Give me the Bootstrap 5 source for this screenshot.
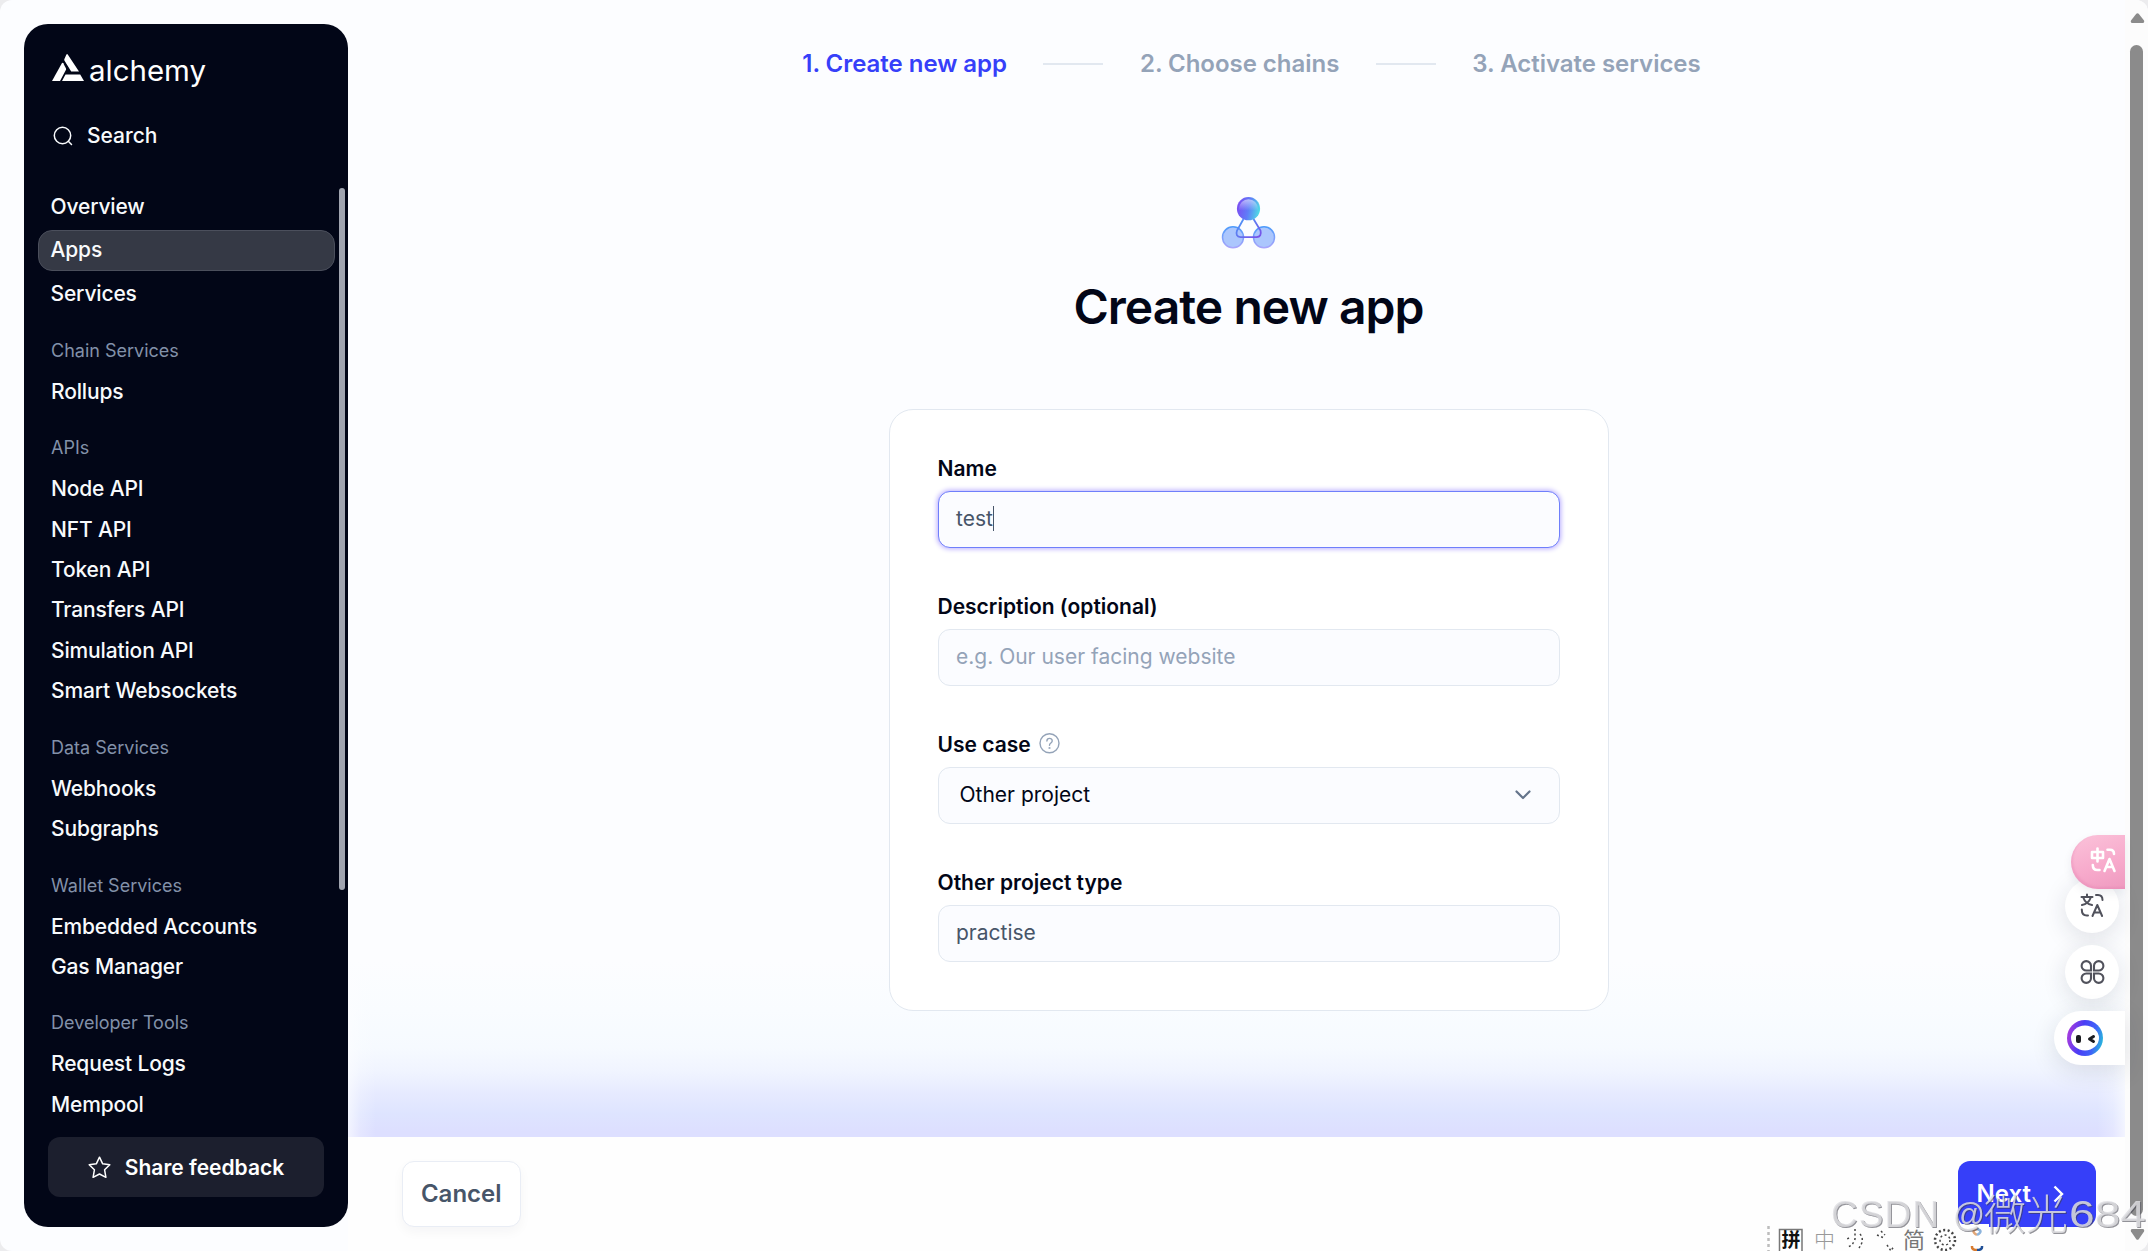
<!DOCTYPE html>
<html lang="en">
<head>
  <meta charset="UTF-8">
  <title>Create new app</title>
  <link rel="stylesheet" href="https://cdn.jsdelivr.net/npm/bootstrap@5.3.0/dist/css/bootstrap.min.css">
  <style>
    html { background: #ececee; }
    body {
      font-family: Inter, "Noto Sans CJK SC", sans-serif;
      font-size: 21px;
      line-height: 30px;
      color: #020617;
      background: transparent;
    }
    svg { display: block; flex: none; }

    .app-window { height: 1251px; background: #fcfdff; border-radius: 12px; }

    /* sidebar */
    .sidebar { width: 324px; height: 1203px; margin: 24px 0 0 24px; background: #020617; color: #f8fafc; border-radius: 24px; flex: none; font-weight: 500; }
    .brand { padding: 22px 0 0 27px; height: 76px; }
    .search-row { height: 72px; padding-left: 29px; gap: 14px; }
    .side-body { height: 957px; padding: 14px 3px 0 13.5px; letter-spacing: -.15px; }
    .side-list { width: 297px; flex: none; }
    .side-list a { display: flex; align-items: center; height: 40.4px; padding-left: 13.5px; color: #f8fafc; text-decoration: none; }
    .side-list a.top-link { height: 41.5px; margin-bottom: 2px; border: 1.5px solid transparent; padding-left: 12px; }
    .side-list a.active { background: #353945; border-color: #4b4f5c; border-radius: 14px; }
    .side-title { height: 41.6px; margin-top: 15.5px; padding-left: 13.5px; font-size: 18px; font-weight: 400; letter-spacing: 0; color: #8291a9; display: flex; align-items: center; }
    .side-thumb { width: 6px; height: 702px; margin-top: 2px; background: #a1a5b0; border-radius: 3px; }
    .feedback { width: 276px; height: 60px; margin: 8px 0 0 24px; padding: 1px 2px 0; gap: 14px; font-size: 21px; background: #1c1f2e; color: #fff; border-radius: 12px; font-weight: 600; }

    /* main */
    .glow {
      height: 1136.5px;
      padding-left: 24px;
      background:
        linear-gradient(to right, rgba(252,253,255,.7), rgba(252,253,255,.25) 12px, rgba(252,253,255,0) 28px),
        linear-gradient(to left, rgba(252,253,255,.7), rgba(252,253,255,.25) 12px, rgba(252,253,255,0) 28px),
        linear-gradient(to bottom, #fcfdff 960px, #f9fcff 1010px, #f6faff 1048px, #f0f4ff 1072px, #e6eaff 1094px, #dee4ff 1114px, #dddfff 1132px);
    }
    .steps { height: 40px; margin: 44px 0 0 6px; gap: 36.5px; font-size: 24px; font-weight: 600; color: #94a3b8; letter-spacing: -.03px; }
    .steps .current { color: #363ff9; }
    .step-line { width: 60px; height: 2px; background: #e2e8f0; }
    .app-icon { margin-top: 106px; margin-right: 1px; }
    .page-title { font-size: 48px; line-height: 60px; font-weight: 600; letter-spacing: -.02em; margin: 21px 0 72px; }

    .form-card { width: 720px; height: 602px; padding: 44px 48px 0; background: #fff; border: 1.5px solid #e2e8f0; border-radius: 24px; }
    .field { margin-bottom: 43.5px; }
    .field label { font-weight: 600; height: 30px; margin-bottom: 6.5px; gap: 8px; display: flex; align-items: center; }
    .field + .field { padding-top: 1px; }
    .field .form-control { height: 57px; padding: 0 17.5px 1px; font-size: 21px; line-height: 30px; color: #475569; background: #fbfcff; border: 1.5px solid #e2e8f0; border-radius: 12px; }
    .field .form-control::placeholder { color: #94a3b8; }
    .field .focused { border-color: #6f7ffb; box-shadow: 0 0 5px 1px #b9adff; }
    .field .picker { color: #020617; padding: 0 27px 0 21px; }
    .caret { width: 1.5px; height: 25px; background: #475569; }

    .action-bar { height: 114.5px; padding: 24px 29.5px 0 54px; background: #fefefe; }
    .action-bar .btn { height: 66px; font-size: 24px; font-weight: 600; border-radius: 12px; padding: 0; }
    .action-bar .btn-cancel { width: 118.5px; color: #475569; background: #fff; border: 1.5px solid #e9edf5; box-shadow: 0 5px 12px rgba(15,23,42,.04); }
    .action-bar .btn-next { width: 138px; padding: 1px 0 0 19px; gap: 22px; color: #fff; background: #363ff9; border: 0; }

    .page-scroll { width: 23px; flex: none; background: #fcfcfc; padding: 13px 0 0 5px; }
    .page-thumb { width: 13px; height: 1171px; margin: 22px 0 13px; background: #8b8b8b; border-radius: 7px; }

    /* widgets that float over the page */
    .float-item { position: absolute; background: #fff; display: flex; align-items: center; box-shadow: 0 6px 24px rgba(30,35,60,.13); }
    .float-cn { left: 2071px; top: 835px; width: 54px; height: 54px; padding: 0 0 4px 19px; border-radius: 27px 0 0 27px; background: linear-gradient(160deg, #fbc3da, #f7a9cb 60%, #ee9abf); box-shadow: inset 2px -2px 2px rgba(225,120,170,.25), 0 4px 10px rgba(30,35,60,.08); z-index: 2; }
    .float-round { left: 2065px; width: 54px; height: 54px; border-radius: 27px; padding: 0 0 1px 15px; }
    .float-tr { top: 879px; }
    .float-grid { top: 945px; }
    .float-bot { left: 2054px; top: 1011px; width: 71px; height: 54px; padding-left: 13px; border-radius: 27px 0 0 27px; }
    .overlay { position: absolute; right: 0; bottom: 0; z-index: 3; }
  </style>
</head>
<body>
  <div class="app-window d-flex position-relative overflow-hidden">

    <aside class="sidebar d-flex flex-column">
      <div class="brand">
        <svg width="160" height="46" viewBox="0 0 160 46" fill="#fff">
          <path d="M15.300 8.700q.8-1.300 1.600 0L28 25.500H20.200L13.400 14.500q-.4-.8 0-1.500z"/>
          <path d="M11 17q.7-.7 1.300.2l2.700 5.300q.3.700 0 1.300L9 35H1z"/>
          <path d="M14.500 28.500h14.700L33 35H11z"/>
          <text x="38" y="35" font-family="Inter" font-size="29" font-weight="400" textLength="117" lengthAdjust="spacingAndGlyphs">alchemy</text>
        </svg>
      </div>
      <div class="search-row d-flex align-items-center">
        <svg width="20" height="20" viewBox="0 0 20 20" fill="none" stroke="#f8fafc" stroke-width="1.5" stroke-linecap="round"><circle cx="9.500" cy="9.500" r="8.200"/><path d="M15.300 15.300l3.200 3.200"/></svg>
        <span>Search</span>
      </div>
      <div class="side-body d-flex justify-content-between overflow-hidden">
        <nav class="side-list" id="side-list"></nav>
        <div class="side-thumb"></div>
      </div>
      <button class="feedback btn d-flex align-items-center justify-content-center border-0">
        <svg width="23" height="23" viewBox="0 0 23 23" fill="none" stroke="#fff" stroke-width="1.500" stroke-linejoin="round"><path d="M11.500 1.200l3.200 6.600 7.100 1-5.200 5 1.300 7.500-6.400-3.300-6.400 3.300 1.300-7.500-5.200-5 7.100-1z"/></svg>
        <span>Share feedback</span>
      </button>
    </aside>

    <main class="flex-grow-1 d-flex flex-column">
      <div class="glow d-flex flex-column align-items-center">
        <div class="steps d-flex align-items-center">
          <span class="current">1. Create new app</span>
          <span class="step-line"></span>
          <span>2. Choose chains</span>
          <span class="step-line"></span>
          <span>3. Activate services</span>
        </div>

        <svg class="app-icon" width="66" height="66" viewBox="0 0 66 66">
          <defs>
            <linearGradient id="ball" x1="0" y1=".4" x2="1" y2=".6"><stop offset="0" stop-color="#7b4df2"/><stop offset=".5" stop-color="#5f7df8"/><stop offset="1" stop-color="#4fe0e4"/></linearGradient>
            <linearGradient id="shine" x1="0" y1="0" x2="0" y2="1"><stop offset="0" stop-color="#fff" stop-opacity=".55"/><stop offset=".6" stop-color="#fff" stop-opacity="0"/></linearGradient>
            <linearGradient id="wire" x1="0" y1="0" x2="1" y2="1"><stop offset="0" stop-color="#4a9cf8"/><stop offset="1" stop-color="#7a4fe8"/></linearGradient>
            <linearGradient id="ring" x1="0" y1="0" x2="0" y2="1"><stop offset="0" stop-color="#4d9bfb"/><stop offset="1" stop-color="#a9a5fb"/></linearGradient>
          </defs>
          <g fill="#abc6fd" stroke="url(#ring)" stroke-width="1.500">
            <circle cx="18" cy="47.300" r="10.500"/>
            <circle cx="49" cy="47.300" r="10.500"/>
          </g>
          <path d="M28.500 29L22 40.500q-2 6 3.500 6.700h16q5.500-.7 4-6.700L38.500 29" fill="none" stroke="url(#wire)" stroke-width="1.800"/>
          <circle cx="33.500" cy="18.700" r="11.600" fill="url(#ball)"/>
          <circle cx="33.500" cy="18.700" r="9.500" fill="url(#shine)"/>
        </svg>
        <h1 class="page-title">Create new app</h1>

        <form class="form-card">
          <div class="field">
            <label>Name</label>
            <div class="form-control focused d-flex align-items-center"><span>test</span><span class="caret"></span></div>
          </div>
          <div class="field">
            <label for="desc">Description (optional)</label>
            <input id="desc" class="form-control" placeholder="e.g. Our user facing website">
          </div>
          <div class="field">
            <label>Use case
              <svg width="21" height="24" viewBox="0 0 21 24" fill="none" stroke="#94a3b8" stroke-width="1.400" stroke-linecap="round"><circle cx="10.500" cy="10.300" r="9.500"/><path d="M7.900 8c.1-3.500 5.400-3.400 5.300 0 0 2-2.700 2.100-2.700 4.200"/><circle cx="10.500" cy="15" r=".4"/></svg>
            </label>
            <div class="form-control picker d-flex align-items-center justify-content-between">
              <span>Other project</span>
              <svg width="18" height="12" viewBox="0 0 18 12" fill="none" stroke="#64748b" stroke-width="2.200" stroke-linecap="round" stroke-linejoin="round"><path d="M2.500 2.500L9 9l6.500-6.500"/></svg>
            </div>
          </div>
          <div class="field">
            <label for="kind">Other project type</label>
            <input id="kind" class="form-control" value="practise">
          </div>
        </form>
      </div>

      <div class="action-bar d-flex justify-content-between">
        <button class="btn btn-cancel">Cancel</button>
        <button class="btn btn-next d-flex align-items-center">
          <span>Next</span>
          <svg width="11" height="18" viewBox="0 0 11 18" fill="none" stroke="#fff" stroke-width="2.400"><path d="M1.500 1.500L9 9l-7.500 7.500"/></svg>
        </button>
      </div>
    </main>

    <div class="page-scroll">
      <svg width="15" height="10" viewBox="0 0 15 10" fill="#8b8b8b"><path d="M6.300.8q1.200-1 2.400 0L14 7.600q.8 2.400-1.500 2.400h-10Q.2 10 1 7.600z"/></svg>
      <div class="page-thumb"></div>
      <svg width="15" height="11" viewBox="0 0 15 11" fill="#8b8b8b"><path d="M6.300 10.200q1.200 1 2.400 0L14 2.400Q14.800 0 12.500 0h-10Q.2 0 1 2.400z"/></svg>
    </div>

    <div class="float-item float-cn">
      <svg width="27" height="26" viewBox="0 0 27 26" fill="none" stroke="#fff" stroke-width="2.600" stroke-linecap="round" stroke-linejoin="round">
        <path d="M2 5h11v6H2zM7.500 1.500v13M17.500 2.800h2.500q4 0 4 4.200M2.800 18q0 5 4.500 5h2.200M14.500 24l5-12 5 12M16.500 20h6"/>
      </svg>
    </div>
    <div class="float-item float-round float-tr">
      <svg width="25" height="25" viewBox="0 0 25 25" fill="none" stroke="#51525c" stroke-width="2" stroke-linecap="round" stroke-linejoin="round">
        <path d="M1.500 4h11M7 1.500V4M3.500 5q2 6 8.500 7M10.500 5q-2 6-8.500 7M16 2h2q4.500 0 4.500 5M1.800 16.500q0 6 5 6H8M12.500 23l4.800-11 4.800 11M14.200 19.500h6.200"/>
      </svg>
    </div>
    <div class="float-item float-round float-grid">
      <svg width="25" height="24" viewBox="0 0 25 24" fill="none" stroke="#51525c" stroke-width="2.100">
        <path d="M11 10.500H6.500A4.700 4.700 0 1 1 11 5.800zM14 10.500h4.500A4.700 4.700 0 1 0 14 5.800zM11 13.500H6.500A4.700 4.700 0 1 0 11 18.200zM14 13.500h4.500A4.700 4.700 0 1 1 14 18.200z"/>
      </svg>
    </div>
    <div class="float-item float-bot">
      <svg width="36" height="36" viewBox="0 0 36 36">
        <defs><linearGradient id="bot" x1="0" y1=".6" x2="1" y2=".8"><stop offset="0" stop-color="#a03be0"/><stop offset=".35" stop-color="#4a3df5"/><stop offset=".7" stop-color="#3f62f8"/><stop offset="1" stop-color="#25c5d8"/></linearGradient></defs>
        <circle cx="18" cy="18" r="18" fill="url(#bot)"/>
        <ellipse cx="18" cy="18" rx="14" ry="12.500" fill="#fff"/>
        <rect x="9" y="15" width="5" height="8" rx="2" fill="#1b1c22"/>
        <path d="M26.500 16.500L22.500 19l4 2.500" fill="none" stroke="#1b1c22" stroke-width="3" stroke-linecap="round" stroke-linejoin="round"/>
      </svg>
    </div>

    <!-- input method bar and watermark in the bottom right corner -->
    <svg class="overlay" width="388" height="61" viewBox="1760 1190 388 61">
      <path d="M1763 1224h226v27h-226z" fill="#fefefe"/>
      <path d="M1768.500 1226v25" stroke="#bdbdbd" stroke-width="2.500" stroke-dasharray="3 3"/>
      <path d="M1779.500 1229.500h22.500v24h-22.500z" fill="#fff" stroke="#777" stroke-width="1.500"/>
      <g font-family="Noto Sans CJK SC" font-size="19">
        <text x="1781.500" y="1247" font-weight="700" fill="#111">拼</text>
        <text x="1814" y="1247" font-size="21" font-weight="300" fill="#999">中</text>
        <text x="1903" y="1248" font-size="22" font-weight="400" fill="#777">简</text>
      </g>
      <g fill="none" stroke="#444" stroke-width="1.500" stroke-dasharray="2 2.500">
        <path d="M1855 1229v10q-2 7-8 8M1860 1234q5 6-1 14M1849 1238l-4 2M1877 1235l7 3M1881 1231l4 4M1887 1245l4 6 3-5"/>
        <circle cx="1945" cy="1240" r="10" stroke-width="2.500"/>
        <circle cx="1945" cy="1240" r="5"/>
      </g>
      <g fill="none" stroke-width="2.500">
        <path d="M1977 1229q-7 2 0 6" stroke="#e2a677"/>
        <path d="M1977 1229q7 2 0 6" stroke="#8cb3dc"/>
        <path d="M1972 1246v1q0 3 5 3" stroke="#d77a2e"/>
        <path d="M1982 1246v1q0 3-5 3" stroke="#1f4f96"/>
      </g>
      <g font-family="'Liberation Sans', 'Noto Sans CJK SC'" font-size="37" style="filter: drop-shadow(1px 1px .7px rgba(60,60,70,.65))" fill="#dedee2" fill-opacity=".85">
        <text x="1831" y="1226.500" textLength="108">CSDN</text>
        <text x="1953" y="1225.500" font-size="33" textLength="32" lengthAdjust="spacingAndGlyphs">@</text>
        <text x="1984" y="1230" font-size="42" font-family="Noto Sans CJK SC" font-weight="300">微光</text>
        <text x="2069" y="1226.500" textLength="77" lengthAdjust="spacingAndGlyphs">684</text>
      </g>
    </svg>
  </div>

  <script src="https://cdn.jsdelivr.net/npm/bootstrap@5.3.0/dist/js/bootstrap.bundle.min.js"></script>
  <script>
    const groups = [
      { title: 'Chain Services', items: ['Rollups'] },
      { title: 'APIs', items: ['Node API', 'NFT API', 'Token API', 'Transfers API', 'Simulation API', 'Smart Websockets'] },
      { title: 'Data Services', items: ['Webhooks', 'Subgraphs'] },
      { title: 'Wallet Services', items: ['Embedded Accounts', 'Gas Manager'] },
      { title: 'Developer Tools', items: ['Request Logs', 'Mempool'] }
    ];

    document.getElementById('side-list').innerHTML = `
      ${['Overview', 'Apps', 'Services'].map(t => `
        <a href="#" class="top-link ${t === 'Apps' ? 'active' : ''}">${t}</a>
      `).join('')}
      ${groups.map(g => `
        <div class="side-title">${g.title}</div>
        ${g.items.map(t => `<a href="#">${t}</a>`).join('')}
      `).join('')}
    `;
  </script>
</body>
</html>
